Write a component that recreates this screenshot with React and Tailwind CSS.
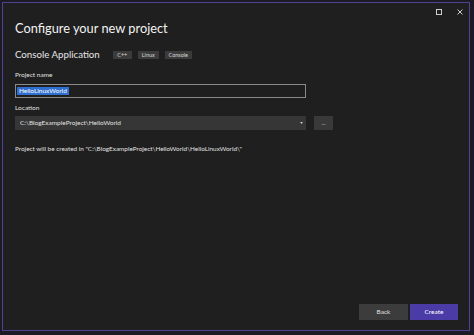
export default function App() {
  const font = { fontFamily: 'Lato, "Noto Sans", sans-serif' };
  return (
    <div className="w-[474px] h-[335px] bg-[#1c1a24] overflow-hidden pt-[2px] pl-[2px]" style={font}>
      <div className="w-[468px] h-[329px] border border-[#4e4296] bg-[#1f1f1f] flex flex-col text-[#e8e8e8]">
        <div className="flex justify-end items-center h-[17px] pr-[6px] gap-[15px]">
          <svg width="6" height="6" viewBox="0 0 6 6"><rect x="0.5" y="0.5" width="5" height="5" fill="none" stroke="#cfcfcf" strokeWidth="1" /></svg>
          <svg width="6" height="6" viewBox="0 0 6 6"><path d="M0.5 0.5L5.5 5.5M5.5 0.5L0.5 5.5" stroke="#cfcfcf" strokeWidth="1" /></svg>
        </div>
        <div className="pl-[12px] flex flex-col flex-1">
          <div className="text-[12.8px] leading-[16px] text-[#f2f2f2]">Configure your new project</div>
          <div className="flex items-center mt-[11px] h-[14px]">
            <span className="text-[9.7px] leading-[14px] text-[#e6e6e6]">Console Application</span>
            <div className="flex gap-[6px] ml-[13px] mt-[1px]">
              <span className="w-[19px] flex justify-center bg-[#3b3b3b] text-[5.5px] leading-[8px] text-[#d8d8d8]">C++</span>
              <span className="w-[21px] flex justify-center bg-[#3b3b3b] text-[5.5px] leading-[8px] text-[#d8d8d8]">Linux</span>
              <span className="w-[27px] flex justify-center bg-[#3b3b3b] text-[5.5px] leading-[8px] text-[#d8d8d8]">Console</span>
            </div>
          </div>
          <div className="text-[6.5px] leading-[10px] mt-[9px] text-[#e0e0e0]">Project name</div>
          <div className="mt-[4px] w-[291px] h-[14px] border border-[#8a8a8a] bg-[#1f1f1f] flex items-center pl-[1px]">
            <span className="bg-[#2f6fd0] text-white text-[6.5px] leading-[8px] px-[2px]">HelloLinuxWorld</span>
          </div>
          <div className="text-[6.5px] leading-[10px] mt-[5px] text-[#e0e0e0]">Location</div>
          <div className="flex items-center mt-[3px]">
            <div className="w-[291px] h-[14px] bg-[#363636] flex items-center justify-between pl-[5px] pr-[3px]">
              <span className="text-[6.5px] leading-[10px] text-[#e0e0e0]">C:\BlogExampleProject\HelloWorld</span>
              <svg width="3" height="2" viewBox="0 0 4 3"><path d="M0 0H4L2 3Z" fill="#d0d0d0" /></svg>
            </div>
            <div className="ml-[8px] w-[19px] h-[14px] bg-[#393939] flex items-center justify-center">
              <span className="text-[6px] leading-[6px] text-[#cfcfcf]">...</span>
            </div>
          </div>
          <div className="text-[6.4px] leading-[10px] mt-[14px] text-[#e0e0e0]">Project will be created in "C:\BlogExampleProject\HelloWorld\HelloLinuxWorld\"</div>
          <div className="flex-1" />
          <div className="flex justify-end gap-[2px] pr-[11px] mb-[10px]">
            <div className="w-[49px] h-[16px] bg-[#3c3c3c] flex items-center justify-center text-[6.5px] text-[#e0e0e0]">Back</div>
            <div className="w-[48px] h-[16px] bg-[#4b3ba6] flex items-center justify-center text-[6.5px] text-white">Create</div>
          </div>
        </div>
      </div>
    </div>
  );
}
